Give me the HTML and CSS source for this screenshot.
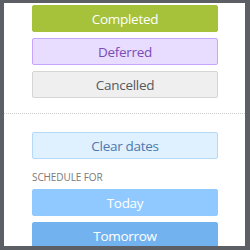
FILE: index.html
```html
<!DOCTYPE html>
<html>
<head>
<meta charset="utf-8">
<link rel="stylesheet" href="styles.css">
</head>
<body>
<div class="panel">
  <div class="group">
    <div class="btn completed">Completed</div>
    <div class="btn deferred">Deferred</div>
    <div class="btn cancelled">Cancelled</div>
  </div>
  <div class="sep"></div>
  <div class="group">
    <div class="btn clear">Clear dates</div>
    <div class="label">SCHEDULE FOR</div>
    <div class="btn today">Today</div>
    <div class="btn tomorrow">Tomorrow</div>
  </div>
</div>
</body>
</html>
```
FILE: styles.css
```css
html, body {
  margin: 0;
  padding: 0;
  background: #5c5f63;
  width: 250px;
  height: 250px;
  overflow: hidden;
}
.panel {
  margin: 3px 5px 0 4px;
  height: 243px;
  background: #fff;
  overflow: hidden;
  font-family: "Open Sans", "Noto Sans", sans-serif;
  padding-top: 2px;
  box-sizing: border-box;
}
.group {
  display: flex;
  flex-direction: column;
  gap: 6px;
  padding: 0 27px 0 28px;
}
.btn {
  height: 27px;
  box-sizing: border-box;
  border-radius: 2px;
  display: flex;
  align-items: center;
  justify-content: center;
  font-size: 13.5px;
  letter-spacing: -0.3px;
  border: 1px solid transparent;
}
.completed { background: #a5c23a; color: #fff; border-color: #a5c23a; }
.deferred { background: #e8dcff; border-color: #c6a5ff; color: #7a4db5; }
.cancelled { background: #efefef; border-color: #d5d5d5; color: #555a60; }
.sep {
  margin: 15px 0 18px;
  border-top: 1px dotted #cfcfcf;
}
.clear { background: #dff0ff; border-color: #b5d9f8; color: #4e79ad; }
.label {
  font-size: 10px;
  letter-spacing: -0.1px;
  color: #7a7a7a;
  margin: 6px 0 0;
  height: 12px;
  line-height: 12px;
}
.today { background: #8fc9ff; border-color: #8fc9ff; color: #fff; }
.tomorrow { background: #72b3ef; border-color: #72b3ef; color: #fff; }
```
